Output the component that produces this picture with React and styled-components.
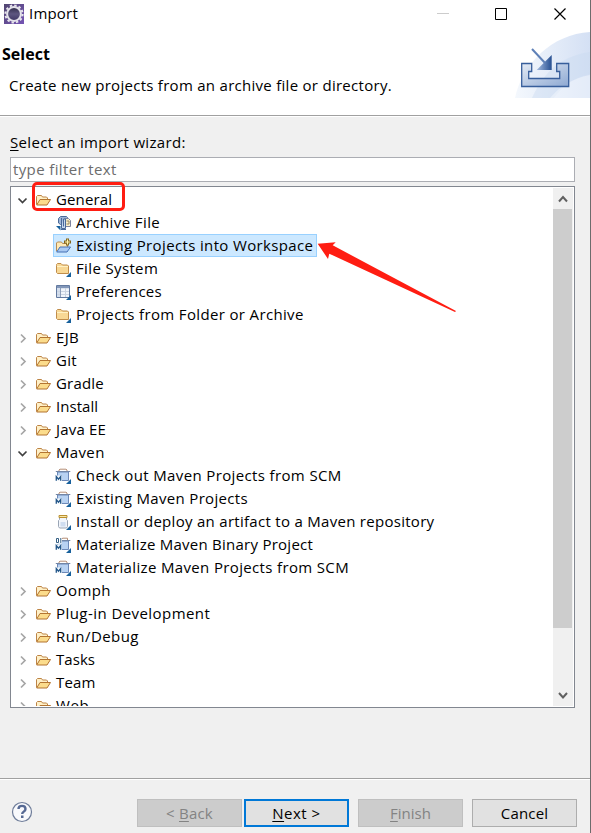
import React from "react";
import styled, { createGlobalStyle, css } from "styled-components";

const Global = createGlobalStyle`
  * { box-sizing: border-box; }
  body { margin: 0; background: #f0f0f0; overflow: hidden; }
`;

const Dialog = styled.main`
  position: relative;
  display: flex;
  flex-direction: column;
  width: 591px;
  height: 833px;
  overflow: hidden;
  background: #f0f0f0;
  border-right: 1px solid #6c6c6c;
  color: #000;
  font-family: "Open Sans", "Noto Sans", sans-serif;
  font-size: 15px;
  line-height: 23px;
  white-space: nowrap;
`;

const Banner = styled.header`
  position: relative;
  flex: none;
  height: 117px;
  background: #fff;
  border-bottom: 1px solid #fff;
  box-shadow: inset 0 -1px 0 #a0a0a0;
`;

const TitleBar = styled.div`
  display: flex;
  align-items: center;
  height: 27px;
  padding-left: 4px;
`;

const WindowTitle = styled.span`
  flex: 1;
  margin-left: 5px;
  letter-spacing: 0.2px;
`;

const Heading = styled.h1`
  margin: 15px 0 0 2px;
  font-size: 16px;
  line-height: 24px;
  font-weight: 700;
  letter-spacing: 0.05px;
`;

const Description = styled.p`
  margin: 8px 0 0 9px;
  line-height: 23px;
  letter-spacing: 0.28px;
`;

const BannerArt = styled.svg`
  position: absolute;
  right: 0;
  top: 30px;
`;

const Body = styled.section`
  flex: none;
  display: flex;
  flex-direction: column;
  height: 661px;
  padding: 14px 15px 0 10px;
`;

const FilterLabel = styled.label`
  height: 26px;
  line-height: 23px;
  letter-spacing: 0.32px;
`;

const Filter = styled.input`
  width: 565px;
  height: 25px;
  padding: 0 2px 2px;
  border: 1px solid #abadb3;
  background: #fff;
  color: #000;
  font: inherit;
  letter-spacing: 0.38px;
  outline: none;
  &::placeholder { color: #6d6d6d; opacity: 1; }
`;

const TreeBox = styled.div`
  display: flex;
  width: 565px;
  height: 522px;
  margin-top: 4px;
  padding: 1px 1px 1px 0;
  border: 1px solid #828790;
  background: #fff;
`;

const Tree = styled.ul`
  flex: 1;
  height: 518px;
  margin: 0;
  padding: 0;
  overflow: hidden;
  list-style: none;
`;

const Row = styled.li`
  display: flex;
  align-items: center;
  height: 23px;
  padding-left: ${(p) => (p.$child ? 42 : 5)}px;
`;

const Toggle = styled.svg`
  flex: none;
  margin-right: 5px;
`;

const Item = styled.span`
  display: flex;
  align-items: center;
  height: 23px;
  padding: 0 3px 0 1px;
  border: 1px solid transparent;
  ${(p) => p.$selected && css`
    background: #cce8ff;
    border-color: #99d1ff;
  `}
`;

const ItemText = styled.span`
  margin-left: 5px;
  letter-spacing: ${(p) => p.$spacing}px;
`;

const Highlight = styled.span`
  position: absolute;
  left: 32px;
  top: 182px;
  width: 93px;
  height: 29px;
  border: 3px solid #ff1d12;
  border-radius: 5px;
`;

const Scrollbar = styled.div`
  display: flex;
  flex-direction: column;
  width: 20px;
  height: 518px;
  background: #f0f0f0;
`;

const ScrollButton = styled.div`
  display: flex;
  align-items: center;
  justify-content: center;
  width: 19px;
  height: 21px;
`;

const Thumb = styled.div`
  width: 19px;
  height: 419px;
  margin-bottom: 57px;
  background: #cdcdcd;
`;

const Footer = styled.footer`
  display: flex;
  align-items: flex-start;
  height: 55px;
  padding: 20px 0 0 11px;
  border-top: 1px solid #a0a0a0;
  box-shadow: inset 0 1px 0 #fff;
`;

const HelpIcon = styled.svg`
  margin: 2px 104px 0 0;
`;

const Button = styled.button`
  width: 105px;
  height: 28px;
  margin: 0 ${(p) => p.$gap || 0}px 0 0;
  padding: 0;
  border: ${(p) => (p.$primary ? "2px solid #0078d7" : "1px solid #adadad")};
  background: #e1e1e1;
  color: #000;
  font: inherit;
  line-height: 24px;
  letter-spacing: ${(p) => p.$spacing || 0}px;
  &:disabled { background: #ccc; border-color: #bfbfbf; color: #838383; }
`;

const Mnemonic = styled.span`
  text-decoration: underline;
  text-decoration-thickness: 1px;
  text-underline-offset: 2px;
`;

const Pointer = styled.svg`
  position: absolute;
  left: 316px;
  top: 240px;
`;

const Corner = () => <path d="M16 11v5h-5z" fill="#17609c" />;

const MavenMark = () => (
  <>
    <path d="M0 7.5h7V13H0z" fill="#f4f8fc" />
    <path d="M1.3 12.8V8.6l2.2 2.6 2.2-2.6v4.2" fill="none" stroke="#245789" strokeWidth="1.3" />
  </>
);

const icons = {
  folder: (
    <>
      <path d="M1.5 12.5v-8l1-1h4l1 1.5h4l1 1v2" fill="#fff0c7" stroke="#bd8446" />
      <path d="M1.7 13 5 7.5h10.5L12 13z" fill="#fbdc8c" stroke="#b37532" strokeLinejoin="round" />
    </>
  ),
  archive: (
    <>
      <path d="M5.5 9.5h3V6h4V2.5l-1-1h-6l-2 2v4.5z" fill="#9db4d6" stroke="#4a6a98" />
      <path d="M9.5 3.5h4l2 2v6h-6z" fill="#f9f0cc" stroke="#7d84a0" />
      <path d="M11.5 6h2.5v3h-2.5" fill="none" stroke="#9a8962" />
      <path d="M6.5 3v10.5h4V4h-2v7.5" fill="#c8d8ed" stroke="#4a6a98" />
      <path d="M6 14.5h5" stroke="#4a6a98" />
      <path d="M1 11h4.5v4.5z" fill="#17609c" />
    </>
  ),
  existing: (
    <>
      <path d="M1.5 13V5l1-1h4l1 1.5h5V9" fill="#ffe9b5" stroke="#b78c52" />
      <path d="M1.7 14 5 9h10.5L12 14z" fill="#a9c9f2" stroke="#4471b5" strokeLinejoin="round" />
      <path d="M9 4h7M12.5 .5v7" stroke="#82631a" strokeWidth="3" />
      <path d="M10 4h5M12.5 1.5v5" stroke="#fff3ac" strokeWidth="1.2" />
    </>
  ),
  file: (
    <>
      <path d="M1.5 4.5v-1l1-1H6L7.5 4h5l1 1v7.5h-11l-1-1z" fill="#f8d895" stroke="#c08d4b" />
      <path d="M2 5.5h11" stroke="#fff1c4" />
      <Corner />
    </>
  ),
  table: (
    <>
      <path d="M1.5 1.5h13v12h-13z" fill="#f1f5fb" stroke="#637aa0" />
      <path d="M2 2h12v2.2H2z" fill="#8297b9" />
      <path d="M2 4.2h3.5V13H2z" fill="#d3deed" />
      <path d="M2 7.5h12M2 10.5h12M10.5 4v9" stroke="#cbd4e2" />
      <path d="M5.5 4v9" stroke="#8f9fba" />
      <Corner />
    </>
  ),
  maven: (
    <>
      <path d="M4 3V2l1-.8h6l1 .8v1" fill="none" stroke="#b68e76" />
      <path d="M2.5 4h11v8.5h-11z" fill="#b8d2f2" stroke="#6d89b8" />
      <path d="M.8 3.5h14.5" stroke="#7286a6" />
      <MavenMark />
      <Corner />
    </>
  ),
  binary: (
    <>
      <path d="M7.5 2V1.2h5V3" fill="none" stroke="#b68e76" />
      <path d="M6 4h7.5v8.5h-11V7" fill="#b8d2f2" stroke="#6d89b8" />
      <path d="M7 3.5h8.3" stroke="#7286a6" />
      <path d="M0 0h7v6.5H0z" fill="#fff" />
      <path d="M1.5 1.5h2v4h-2zM5.8 1v5" fill="none" stroke="#345f83" />
      <MavenMark />
      <Corner />
    </>
  ),
  jar: (
    <>
      <path d="M4.5 3.5v2l-1 1v6l1 1.5h7l1-1.5v-6l-1-1v-2z" fill="#f1f5fb" stroke="#9aa5b5" />
      <path d="M4 1.5h8v2H4z" fill="#f9e7a5" stroke="#ba9031" />
      <path d="M5.5 8h5v4.5h-5z" fill="#cfddf0" />
      <Corner />
    </>
  ),
};

const rows = [
  { text: "General", open: true, spacing: 0.14 },
  { text: "Archive File", icon: "archive", spacing: 0.4 },
  { text: "Existing Projects into Workspace", icon: "existing", selected: true, spacing: 0.36 },
  { text: "File System", icon: "file", spacing: 0.36 },
  { text: "Preferences", icon: "table", spacing: 0.2 },
  { text: "Projects from Folder or Archive", icon: "file", spacing: 0.35 },
  { text: "EJB", spacing: 0.3 },
  { text: "Git", spacing: 0.3 },
  { text: "Gradle", spacing: 0.2 },
  { text: "Install", spacing: 0.05 },
  { text: "Java EE", spacing: 0.2 },
  { text: "Maven", open: true, spacing: 0.35 },
  { text: "Check out Maven Projects from SCM", icon: "maven", spacing: 0.37 },
  { text: "Existing Maven Projects", icon: "maven", spacing: 0.33 },
  { text: "Install or deploy an artifact to a Maven repository", icon: "jar", spacing: 0.29 },
  { text: "Materialize Maven Binary Project", icon: "binary", spacing: 0.25 },
  { text: "Materialize Maven Projects from SCM", icon: "maven", spacing: 0.35 },
  { text: "Oomph", spacing: 0.4 },
  { text: "Plug-in Development", spacing: 0.44 },
  { text: "Run/Debug", spacing: 0.44 },
  { text: "Tasks", spacing: 0.05 },
  { text: "Team", spacing: 0.2 },
  { text: "Web", spacing: 0.6 },
];

function TreeRow({ text, icon, open, selected, spacing }) {
  return (
    <Row $child={!!icon}>
      {!icon && (
        <Toggle width="12" height="12" fill="none" strokeWidth="1.7">
          {open ? <path d="m2.5 4.5 4 4 4-4" stroke="#404040" /> : <path d="m5 2.5 4 4-4 4" stroke="#a6a6a6" />}
        </Toggle>
      )}
      <Item $selected={selected}>
        <svg width="16" height="16">{icons[icon || "folder"]}</svg>
        <ItemText $spacing={spacing}>{text}</ItemText>
      </Item>
    </Row>
  );
}

function AppIcon() {
  return (
    <svg width="20" height="20">
      <defs>
        <linearGradient id="app" x2="1" y2="1">
          <stop stopColor="#51466f" /><stop offset="1" stopColor="#7554b5" />
        </linearGradient>
        <linearGradient id="core" x2="0" y2="1">
          <stop stopColor="#2f2b48" /><stop offset=".5" stopColor="#5d5680" /><stop offset="1" stopColor="#3d3563" />
        </linearGradient>
      </defs>
      <path d="M0 0h20v20H0z" fill="url(#app)" />
      <circle cx="10" cy="10" r="8.6" fill="none" stroke="#e9e8ed" strokeWidth="2" strokeDasharray="2.4 2.1" />
      <circle cx="10" cy="10" r="6.9" fill="url(#core)" stroke="#e4e2ea" strokeWidth="2" />
    </svg>
  );
}

export default function App() {
  return (
    <Dialog>
      <Global />
      <Banner>
        <TitleBar>
          <AppIcon />
          <WindowTitle>Import</WindowTitle>
          <svg width="153" height="26" fill="none" stroke="#000">
            <path d="M0 12.5h12" stroke="#ccc" />
            <path d="M58.5 7.5h11v11h-11z" />
            <path d="m117.5 7.5 11 11m0-11-11 11" strokeWidth="1.2" />
          </svg>
        </TitleBar>
        <Heading>Select</Heading>
        <Description>Create new projects from an archive file or directory.</Description>
        <BannerArt width="76" height="68">
          <defs>
            <linearGradient id="sky"><stop stopColor="#f4f8fd" /><stop offset="1" stopColor="#d4e0f4" /></linearGradient>
            <linearGradient id="tray" x2="1" y2="1"><stop stopColor="#e4ebf5" /><stop offset="1" stopColor="#8da8d2" /></linearGradient>
            <linearGradient id="head"><stop stopColor="#a5bce0" /><stop offset="1" stopColor="#264f91" /></linearGradient>
          </defs>
          <path d="M1 68C8 34 38 4 76 2v66z" fill="url(#sky)" />
          <path d="M18 68C33 36 51 26 76 22v22C60 48 48 56 40 68z" fill="#c9d9f1" opacity=".4" />
          <path d="M36 68c11-13 24-20 40-23v23z" fill="#f3f7fe" opacity=".5" />
          <path d="M7.5 33.5h10v8h-3v7h31v-7h-3v-8h12v23h-47z" transform="translate(.2)" fill="url(#tray)" stroke="#375e9b" strokeWidth="1.3" />
          <path d="m18 19 14 15" stroke="#5e80b7" strokeWidth="2" />
          <path d="M37.7 25v15h-15z" fill="url(#head)" />
        </BannerArt>
      </Banner>
      <Body>
        <FilterLabel><Mnemonic>S</Mnemonic>elect an import wizard:</FilterLabel>
        <Filter placeholder="type filter text" />
        <TreeBox>
          <Tree>{rows.map((row) => <TreeRow key={row.text} {...row} />)}</Tree>
          <Scrollbar>
            <ScrollButton>
              <svg width="12" height="10"><path d="m2 7.5 4-4.5 4 4.5" fill="none" stroke="#606060" strokeWidth="2" /></svg>
            </ScrollButton>
            <Thumb />
            <ScrollButton>
              <svg width="12" height="10"><path d="m2 2 4 4.5L10 2" fill="none" stroke="#606060" strokeWidth="2" /></svg>
            </ScrollButton>
          </Scrollbar>
        </TreeBox>
      </Body>
      <Footer>
        <HelpIcon width="22" height="22" fill="none">
          <circle cx="11" cy="11" r="9.5" fill="#f8f9fc" stroke="#6e7c99" strokeWidth="1.2" />
          <path d="M7.5 8c0-4.2 7-4.2 7 0 0 2.7-3.3 2.5-3.3 5" stroke="#566994" strokeWidth="2.4" />
          <path d="M10 14.5h2.5V17H10z" fill="#566994" />
        </HelpIcon>
        <Button disabled $gap={2} $spacing={0.2}>&lt; <Mnemonic>B</Mnemonic>ack</Button>
        <Button $primary $gap={9} $spacing={0.5}><Mnemonic>N</Mnemonic>ext &gt;</Button>
        <Button disabled $gap={9}><Mnemonic>F</Mnemonic>inish</Button>
        <Button $spacing={0.15}>Cancel</Button>
      </Footer>
      <Highlight />
      <Pointer width="142" height="75">
        <path d="M1.7 3.7 19.7 2.3l-3 3L140 71l-1 1L13.3 13.7 12 19z" fill="#ff1d12" />
      </Pointer>
    </Dialog>
  );
}
